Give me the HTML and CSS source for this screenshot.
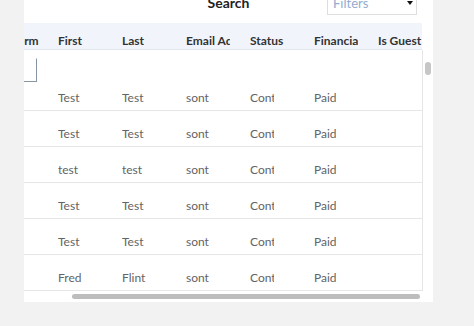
FILE: index.html
```html
<!DOCTYPE html>
<html>
<head>
<meta charset="utf-8">
<link rel="stylesheet" href="styles.css">
</head>
<body>
<div class="panel">
  <div class="topbar">
    <div></div>
    <div class="title">Search</div>
    <div class="filters"><span>Filters</span><span class="caret"></span></div>
  </div>
  <div class="grid">
    <div class="viewport">
      <div class="strip">
        <div class="row head">
          <div class="cell c0"><span>Form</span></div>
          <div class="cell"><span>First</span></div>
          <div class="cell"><span>Last</span></div>
          <div class="cell"><span>Email Address</span></div>
          <div class="cell"><span>Status</span></div>
          <div class="cell"><span>Financial</span></div>
          <div class="cell"><span>Is Guest</span></div>
        </div>
        <div class="row filter">
          <div class="cell c0"><div class="input"></div></div>
        </div>
        <div class="row data">
          <div class="cell c0"></div>
          <div class="cell"><span>Test</span></div>
          <div class="cell"><span>Test</span></div>
          <div class="cell"><span>sont</span></div>
          <div class="cell"><span>Contact</span></div>
          <div class="cell"><span>Paid</span></div>
          <div class="cell"></div>
        </div>
        <div class="row data">
          <div class="cell c0"></div>
          <div class="cell"><span>Test</span></div>
          <div class="cell"><span>Test</span></div>
          <div class="cell"><span>sont</span></div>
          <div class="cell"><span>Contact</span></div>
          <div class="cell"><span>Paid</span></div>
          <div class="cell"></div>
        </div>
        <div class="row data">
          <div class="cell c0"></div>
          <div class="cell"><span>test</span></div>
          <div class="cell"><span>test</span></div>
          <div class="cell"><span>sont</span></div>
          <div class="cell"><span>Contact</span></div>
          <div class="cell"><span>Paid</span></div>
          <div class="cell"></div>
        </div>
        <div class="row data">
          <div class="cell c0"></div>
          <div class="cell"><span>Test</span></div>
          <div class="cell"><span>Test</span></div>
          <div class="cell"><span>sont</span></div>
          <div class="cell"><span>Contact</span></div>
          <div class="cell"><span>Paid</span></div>
          <div class="cell"></div>
        </div>
        <div class="row data">
          <div class="cell c0"></div>
          <div class="cell"><span>Test</span></div>
          <div class="cell"><span>Test</span></div>
          <div class="cell"><span>sont</span></div>
          <div class="cell"><span>Contact</span></div>
          <div class="cell"><span>Paid</span></div>
          <div class="cell"></div>
        </div>
        <div class="row data">
          <div class="cell c0"></div>
          <div class="cell"><span>Fred</span></div>
          <div class="cell"><span>Flint</span></div>
          <div class="cell"><span>sont</span></div>
          <div class="cell"><span>Contact</span></div>
          <div class="cell"><span>Paid</span></div>
          <div class="cell"></div>
        </div>
      </div>
    </div>
    <div class="vscroll"><div class="vtrack"><div class="vthumb"></div></div></div>
  </div>
  <div class="hscroll"><div class="hthumb"></div></div>
</div>
</body>
</html>
```
FILE: styles.css
```css
html, body {
  margin: 0;
  padding: 0;
}
body {
  background: #f2f2f2;
  overflow: hidden;
  font-family: Lato, "Open Sans", sans-serif;
  height: 326px;
}
.panel {
  margin: -10px 0 0 24px;
  width: 409px;
  background: #fff;
}
.topbar {
  height: 33px;
  display: grid;
  grid-template-columns: 1fr auto 1fr;
  align-items: start;
}
.title {
  font-size: 14px;
  font-weight: 700;
  line-height: 20px;
  margin-top: 3px;
  color: #222;
}
.filters {
  justify-self: end;
  margin: 1px 16px 0 0;
  width: 90px;
  height: 24px;
  box-sizing: border-box;
  border: 1px solid #dedede;
  display: flex;
  align-items: center;
  justify-content: space-between;
  padding: 0 3px 0 5px;
  font-size: 13px;
  color: #93acd2;
}
.caret {
  width: 0;
  height: 0;
  border-left: 3px solid transparent;
  border-right: 3px solid transparent;
  border-top: 4px solid #111;
}
.grid {
  display: flex;
}
.viewport {
  width: 398px;
  overflow: hidden;
}
.strip {
  margin-left: -23px;
  width: max-content;
}
.row {
  display: flex;
}
.cell {
  flex: none;
  width: 64px;
  box-sizing: border-box;
  padding: 0 10px;
  white-space: nowrap;
}
.cell span {
  display: block;
  overflow: hidden;
}
.c0 {
  width: 47px;
}
.head {
  background: #f1f5fb;
  height: 27px;
  box-sizing: border-box;
  border-bottom: 1px solid #e3e8ef;
  font-weight: 700;
  color: #333;
  font-size: 12px;
  line-height: 14px;
}
.head .cell {
  padding-top: 11px;
}
.head .cell span {
  width: 44px;
}
.filter {
  height: 25px;
}
.input {
  margin-top: 8px;
  width: 26px;
  height: 24px;
  box-sizing: border-box;
  border: 1px solid #8595a4;
  border-top-color: transparent;
}
.data {
  height: 36px;
  box-sizing: border-box;
  border-bottom: 1px solid #e6e6e6;
  font-size: 12px;
  line-height: 16px;
  color: #636363;
}
.data .cell {
  padding-top: 15px;
}
.data .cell span {
  width: 24px;
}
.vscroll {
  width: 11px;
  padding-top: 27px;
  box-sizing: border-box;
}
.vtrack {
  height: 241px;
  border-left: 1px solid #e6e6e6;
  box-sizing: border-box;
  padding: 12px 0 0 2px;
}
.vthumb {
  width: 6px;
  height: 13px;
  border-radius: 3px;
  background: #c6c6c6;
}
.hscroll {
  height: 11px;
  padding-top: 3px;
  box-sizing: border-box;
}
.hthumb {
  margin-left: 48px;
  width: 348px;
  height: 5px;
  border-radius: 3px;
  background: #bdbdbd;
}
```
